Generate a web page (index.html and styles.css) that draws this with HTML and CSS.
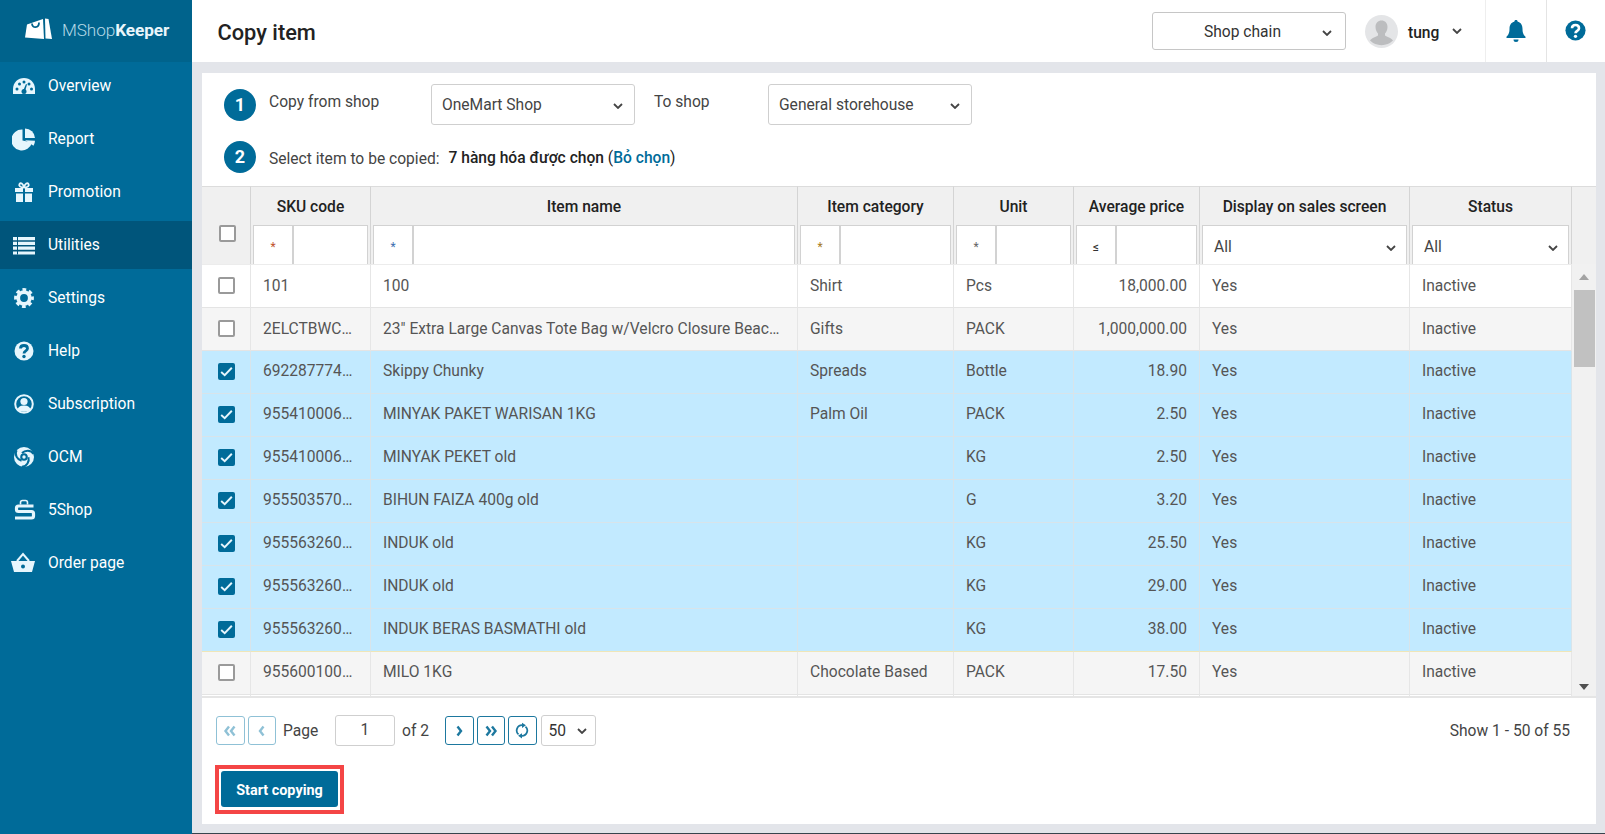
FILE: index.html
```html
<!DOCTYPE html>
<html lang="en">
<head>
<meta charset="utf-8">
<title>Copy item</title>
<link rel="stylesheet" href="styles.css">
</head>
<body>
<div class="app">
  <aside class="sidebar">
    <div class="logo">
      <svg class="logo-icon" viewBox="0 0 28 24"><path fill="#fff" d="M3 7.500 19 2l1 20-19-1.500z"/><path fill="#fff" d="M21 1.500 24.500 2 28 22l-6.500-.5z"/><path fill="none" stroke="#00638c" stroke-width="1.800" d="M8 6.500c0 5 7 5 7-1"/></svg>
      <span class="logo-text"><span class="logo-light">MShop</span><b>Keeper</b></span>
    </div>
    <nav class="menu">
      <a class="item"><svg class="ico" viewBox="0 0 24 24"><path fill="#e6f6fd" d="M1 20v-5C1 8.500 6 4 12 4s11 4.500 11 11v5z"/><g fill="#006b99"><circle cx="5" cy="15" r="1.500"/><circle cx="7.500" cy="10" r="1.500"/><circle cx="12" cy="8" r="1.500"/><circle cx="17" cy="10" r="1.500"/><circle cx="19.500" cy="15" r="1.500"/><circle cx="12" cy="17.500" r="2.500"/><path d="M11 17l3-7 1 .5-2 7z"/></g></svg><span>Overview</span></a>
      <a class="item"><svg class="ico" viewBox="0 0 24 24"><path fill="#e6f6fd" d="M10.500 2.500A10.500 10.500 0 1 0 20 15.500l-9.500-2z"/><path fill="#e6f6fd" d="M13 1.500a10 10 0 0 1 10 9.500H13z"/><path fill="#e6f6fd" d="M13 13.200l10 .5a10 10 0 0 1-1.500 5z"/></svg><span>Report</span></a>
      <a class="item"><svg class="ico" viewBox="0 0 24 24"><path fill="#e6f6fd" d="M3 8h8v4H3zM13 8h8v4h-8zM4 13.500h7V22H4zM13 13.500h7V22h-7z"/><path fill="none" stroke="#e6f6fd" stroke-width="1.800" d="M12 7.500C8 7.500 6.500 5.500 7.500 4S11 3 12 7.500c1-4.500 3.500-5 4.500-3.500s-.5 3.500-4.500 3.500z"/></svg><span>Promotion</span></a>
      <a class="item active"><svg class="ico" viewBox="0 0 24 24"><path fill="#e6f6fd" d="M1 4h22v3.200H1zM1 8.800h22V12H1zM1 13.600h22v3.200H1zM1 18.400h22v3.200H1z"/><path fill="#00557b" d="M5 4h1v17.600H5z"/></svg><span>Utilities</span></a>
      <a class="item"><svg class="ico" viewBox="0 0 24 24"><circle cx="12" cy="12" r="5.800" fill="none" stroke="#e6f6fd" stroke-width="3.800"/><circle cx="12" cy="12" r="8.400" fill="none" stroke="#e6f6fd" stroke-width="3" stroke-dasharray="3.700 2.900" stroke-dashoffset="1.800"/></svg><span>Settings</span></a>
      <a class="item"><svg class="ico" viewBox="0 0 24 24"><circle cx="12" cy="12" r="9.500" fill="#e6f6fd"/><path fill="none" stroke="#006b99" stroke-width="2.800" d="M8.500 9.500C8.500 5.500 15.500 5.500 15.500 9.500c0 2.500-3.500 2.300-3.500 5"/><circle cx="12" cy="17.500" r="1.700" fill="#006b99"/></svg><span>Help</span></a>
      <a class="item"><svg class="ico" viewBox="0 0 24 24"><circle cx="12" cy="12" r="8.800" fill="none" stroke="#e6f6fd" stroke-width="2"/><circle cx="12" cy="9.500" r="3.600" fill="#e6f6fd"/><path fill="#e6f6fd" d="M5.500 17.500c1-3.500 4-4 6.500-4s5.500.5 6.500 4c-3.500 3-9.500 3-13 0z"/></svg><span>Subscription</span></a>
      <a class="item"><svg class="ico" viewBox="0 0 24 24"><circle cx="12" cy="12" r="10" fill="#e6f6fd"/><g fill="none" stroke="#006b99" stroke-width="2"><path d="M21.500 9C19 4.500 13 5 10 8"/><path transform="rotate(120 12 12)" d="M21.500 9C19 4.500 13 5 10 8"/><path transform="rotate(240 12 12)" d="M21.500 9C19 4.500 13 5 10 8"/></g><circle cx="12" cy="12" r="3.800" fill="#006b99"/><circle cx="12" cy="12" r="1.700" fill="#e6f6fd"/></svg><span>OCM</span></a>
      <a class="item"><svg class="ico" viewBox="0 0 24 24"><path fill="none" stroke="#e6f6fd" stroke-width="3.200" d="M21.500 8H6.500a2 2 0 0 0-2 2v1.500a2 2 0 0 0 2 2h13a2 2 0 0 1 2 2v2.500a2 2 0 0 1-2 2H3"/><path fill="none" stroke="#e6f6fd" stroke-width="1.600" d="M8.500 6.500V4.500a2 2 0 0 1 2-2h3a2 2 0 0 1 2 2v2"/></svg><span>5Shop</span></a>
      <a class="item"><svg class="ico ico-basket" viewBox="0 0 24 24"><path fill="#e6f6fd" d="M0 10h24l-3 11H3z"/><path fill="none" stroke="#e6f6fd" stroke-width="2" d="M6 10l6-7 6 7"/><circle cx="12" cy="15.500" r="2" fill="#006b99"/></svg><span>Order page</span></a>
    </nav>
  </aside>

  <div class="main">
    <header class="topbar">
      <h1 class="title">Copy item</h1>
      <div class="shop-select"><span>Shop chain</span><svg class="chev" viewBox="0 0 10 6"><path d="M1 1l4 4 4-4"/></svg></div>
      <div class="user">
        <svg class="avatar" viewBox="0 0 33 33"><circle cx="16.500" cy="16.500" r="16.500" fill="#e4e5e7"/><path fill="#bcbdbf" d="M10.500 12c0-4 2.500-6.500 6-6.500s6 2.500 6 6.500c0 3-1.500 5.500-2.500 6.500v2c2 1.500 6 2 8 5a16.500 16.500 0 0 1-23 0c2-3 6-3.500 8-5v-2c-1-1-2.500-3.500-2.500-6.500z"/></svg>
        <span class="user-name">tung</span>
        <svg class="chev" viewBox="0 0 10 6"><path d="M1 1l4 4 4-4"/></svg>
      </div>
      <div class="top-cell bell">
        <svg viewBox="0 0 20 24"><path fill="#006b99" d="M10 1c1 0 1.700.7 1.700 1.700 3.300.7 4.800 3.500 4.800 7 0 4.500 1.300 6.300 3 8V19H.5v-1.300c1.700-1.700 3-3.500 3-8 0-3.500 1.500-6.300 4.800-7C8.300 1.700 9 1 10 1z"/><path fill="#006b99" d="M7.500 20.500h5a2.500 2.500 0 0 1-5 0z"/></svg>
      </div>
      <div class="top-cell help">
        <svg viewBox="0 0 24 24"><circle cx="12" cy="12" r="11.500" fill="#006b99"/><path fill="none" stroke="#fff" stroke-width="3" d="M8 9.500C8 4.500 16 4.500 16 9.500c0 3-4 2.700-4 5.500"/><circle cx="12" cy="18.700" r="1.900" fill="#fff"/></svg>
      </div>
    </header>

    <section class="panel">
      <div class="steps">
        <div class="step-one">
          <span class="badge">1</span>
          <span class="label label-from">Copy from shop</span>
          <div class="select select-shop"><span>OneMart Shop</span><svg class="chev" viewBox="0 0 10 6"><path d="M1 1l4 4 4-4"/></svg></div>
          <span class="label label-to">To shop</span>
          <div class="select select-shop"><span>General storehouse</span><svg class="chev" viewBox="0 0 10 6"><path d="M1 1l4 4 4-4"/></svg></div>
        </div>
        <div class="step-two">
          <span class="badge">2</span>
          <span class="label select-label">Select item to be copied:</span>
          <span class="chosen">7 hàng hóa được chọn <span class="paren">(</span><a class="clear">Bỏ chọn</a><span class="paren">)</span></span>
        </div>
      </div>

      <table class="grid grid-head">
        <colgroup><col class="c1"><col class="c2"><col class="c3"><col class="c4"><col class="c5"><col class="c6"><col class="c7"><col class="c8"><col class="c9"></colgroup>
        <tr class="head-row">
          <th rowspan="2" class="check-head"><span class="cb"></span></th>
          <th>SKU code</th><th>Item name</th><th>Item category</th><th>Unit</th><th>Average price</th><th>Display on sales screen</th><th>Status</th>
          <th rowspan="2" class="filler"></th>
        </tr>
        <tr class="filter-row">
          <td><div class="filter"><span class="op red">*</span><span class="val"></span></div></td>
          <td><div class="filter"><span class="op blue">*</span><span class="val"></span></div></td>
          <td><div class="filter"><span class="op amber">*</span><span class="val"></span></div></td>
          <td><div class="filter"><span class="op gray">*</span><span class="val"></span></div></td>
          <td><div class="filter"><span class="op dark">≤</span><span class="val"></span></div></td>
          <td><div class="filter filter-select"><span>All</span><svg class="chev" viewBox="0 0 10 6"><path d="M1 1l4 4 4-4"/></svg></div></td>
          <td><div class="filter filter-select"><span>All</span><svg class="chev" viewBox="0 0 10 6"><path d="M1 1l4 4 4-4"/></svg></div></td>
        </tr>
      </table>

      <div class="body-wrap">
        <div class="body-scroll">
          <table class="grid grid-body">
            <colgroup><col class="c1"><col class="c2"><col class="c3"><col class="c4"><col class="c5"><col class="c6"><col class="c7"><col class="c8"></colgroup>
            <tr class="first top"><td class="ck"><span class="cb"></span></td><td>101</td><td>100</td><td>Shirt</td><td>Pcs</td><td class="num">18,000.00</td><td>Yes</td><td>Inactive</td></tr>
            <tr class="alt top"><td class="ck"><span class="cb"></span></td><td>2ELCTBWCBLK</td><td>23" Extra Large Canvas Tote Bag w/Velcro Closure Beach Shopping Bag</td><td>Gifts</td><td>PACK</td><td class="num">1,000,000.00</td><td>Yes</td><td>Inactive</td></tr>
            <tr class="sel"><td class="ck"><span class="cb on"><svg viewBox="0 0 16 16"><path d="M3 8.500l3.300 3L13 4.500"/></svg></span></td><td>6922877741234</td><td>Skippy Chunky</td><td>Spreads</td><td>Bottle</td><td class="num">18.90</td><td>Yes</td><td>Inactive</td></tr>
            <tr class="sel"><td class="ck"><span class="cb on"><svg viewBox="0 0 16 16"><path d="M3 8.500l3.300 3L13 4.500"/></svg></span></td><td>9554100061111</td><td>MINYAK PAKET WARISAN 1KG</td><td>Palm Oil</td><td>PACK</td><td class="num">2.50</td><td>Yes</td><td>Inactive</td></tr>
            <tr class="sel"><td class="ck"><span class="cb on"><svg viewBox="0 0 16 16"><path d="M3 8.500l3.300 3L13 4.500"/></svg></span></td><td>9554100062222</td><td>MINYAK PEKET old</td><td></td><td>KG</td><td class="num">2.50</td><td>Yes</td><td>Inactive</td></tr>
            <tr class="sel"><td class="ck"><span class="cb on"><svg viewBox="0 0 16 16"><path d="M3 8.500l3.300 3L13 4.500"/></svg></span></td><td>9555035701111</td><td>BIHUN FAIZA 400g old</td><td></td><td>G</td><td class="num">3.20</td><td>Yes</td><td>Inactive</td></tr>
            <tr class="sel"><td class="ck"><span class="cb on"><svg viewBox="0 0 16 16"><path d="M3 8.500l3.300 3L13 4.500"/></svg></span></td><td>9555632601111</td><td>INDUK old</td><td></td><td>KG</td><td class="num">25.50</td><td>Yes</td><td>Inactive</td></tr>
            <tr class="sel"><td class="ck"><span class="cb on"><svg viewBox="0 0 16 16"><path d="M3 8.500l3.300 3L13 4.500"/></svg></span></td><td>9555632602222</td><td>INDUK old</td><td></td><td>KG</td><td class="num">29.00</td><td>Yes</td><td>Inactive</td></tr>
            <tr class="sel last-sel"><td class="ck"><span class="cb on"><svg viewBox="0 0 16 16"><path d="M3 8.500l3.300 3L13 4.500"/></svg></span></td><td>9555632603333</td><td>INDUK BERAS BASMATHI old</td><td></td><td>KG</td><td class="num">38.00</td><td>Yes</td><td>Inactive</td></tr>
            <tr class="alt tail"><td class="ck"><span class="cb"></span></td><td>9556001001111</td><td>MILO 1KG</td><td>Chocolate Based</td><td>PACK</td><td class="num">17.50</td><td>Yes</td><td>Inactive</td></tr>
            <tr><td></td><td></td><td></td><td></td><td></td><td></td><td></td><td></td></tr>
          </table>
        </div>
        <div class="scrollbar">
          <span class="arrow-up"></span>
          <div class="track"><div class="thumb"></div></div>
          <span class="arrow-down"></span>
        </div>
      </div>

      <div class="pager">
        <button class="pg off"><svg viewBox="0 0 14 12"><path d="M6 1.500 2.500 6 6 10.500M11.500 1.500 8 6l3.500 4.500"/></svg></button>
        <button class="pg off"><svg viewBox="0 0 14 12"><path d="M8.500 1.500 5 6l3.500 4.500"/></svg></button>
        <span class="pg-page">Page</span>
        <div class="pg-input">1</div>
        <span class="pg-of">of 2</span>
        <button class="pg"><svg viewBox="0 0 14 12"><path d="M5.500 1.500 9 6l-3.500 4.500"/></svg></button>
        <button class="pg"><svg viewBox="0 0 14 12"><path d="M2.500 1.500 6 6l-3.500 4.500M8 1.500 11.500 6 8 10.500"/></svg></button>
        <button class="pg"><svg class="sync" viewBox="0 0 16 18"><path d="M8 3A6 6 0 0 0 4 13.500M8 15a6 6 0 0 0 4-10.500"/><path class="tip" d="M8 0v6l4.500-3zM8 18v-6l-4.500 3z"/></svg></button>
        <div class="pg-size"><span>50</span><svg class="chev" viewBox="0 0 10 6"><path d="M1 1l4 4 4-4"/></svg></div>
        <span class="pg-info">Show 1 - 50 of 55</span>
      </div>

      <div class="actions">
        <div class="callout"><button class="start">Start copying</button></div>
      </div>
    </section>
  </div>
</div>
</body>
</html>
```
FILE: styles.css
```css
* { box-sizing: border-box; }
html, body { margin: 0; padding: 0; height: 100%; }
body { font-family: Roboto, "Noto Sans", sans-serif; font-size: 15.600px; color: #444; overflow: hidden; background: #e3e5ea; }
.app { display: flex; width: 1605px; height: 834px; }

/* sidebar */
.sidebar { width: 192px; flex: none; background: #006b99; color: #fff; }
.logo { height: 62px; background: #00638c; display: flex; align-items: center; padding-left: 24px; }
.logo-icon { width: 28px; height: 24px; margin-top: -4px; }
.logo-text { margin-left: 10px; font-size: 17.200px; letter-spacing: -.1px; margin-top: -3px; }
.logo-light { color: #b5d8e6; font-weight: 300; }
.logo-text b { font-weight: 700; color: #e9f6fb; }
.item { display: flex; align-items: center; height: 48px; margin-bottom: 5px; padding-left: 12px; color: #fff; }
.item.active { background: #00557b; }
.ico { width: 24px; height: 24px; flex: none; margin-right: 12px; }
.ico-basket { margin-left: -1px; margin-right: 13px; }

/* main */
.main { flex: 1; min-width: 0; display: flex; flex-direction: column; border-bottom: 1px solid #37444d; }
.topbar { height: 62px; flex: none; background: #fff; display: flex; align-items: stretch; padding-left: 25.500px; }
.title { margin: 0; font-size: 21.800px; font-weight: 500; color: #222; line-height: 66px; flex: 1; }
.shop-select { width: 194px; height: 38px; margin-top: 12px; border: 1px solid #c6c6c6; border-radius: 3px; display: flex; align-items: center; padding: 2px 0 0 51px; color: #333; }
.shop-select span { flex: 1; }
.chev { width: 10px; height: 6px; flex: none; fill: none; stroke: #444; stroke-width: 1.800; }
.shop-select .chev { margin-right: 13px; margin-top: 2px; }
.user { width: 140px; display: flex; align-items: center; padding-left: 19px; border-right: 1px solid #eeeeee; }
.avatar { width: 33px; height: 33px; flex: none; }
.user-name { margin-left: 10px; font-weight: 500; color: #222; width: 44px; padding-top: 4px; }
.top-cell { display: flex; align-items: center; justify-content: center; }
.bell { width: 61px; border-right: 1px solid #e4e4e4; }
.bell svg { width: 20px; height: 24px; }
.help { width: 58px; padding-right: 2px; }
.help svg { width: 21px; height: 21px; margin-top: -2px; }

/* panel */
.panel { flex: 1; margin: 11px 9px 9px 10px; background: #fff; display: flex; flex-direction: column; min-height: 0; }
.steps { height: 113px; flex: none; padding: 11px 0 0 22px; }
.step-one { display: flex; align-items: center; height: 41px; }
.step-two { display: flex; align-items: center; height: 31px; margin-top: 16px; }
.badge { width: 32px; height: 32px; border-radius: 50%; background: #006b99; color: #fff; font-weight: 700; font-size: 18px; display: flex; align-items: center; justify-content: center; flex: none; }
.label { color: #444; }
.label-from { margin-left: 13px; width: 162px; margin-bottom: 6px; flex: none; }
.label-to { margin-left: 19px; width: 114px; margin-bottom: 6px; flex: none; }
.select { height: 41px; border: 1px solid #cfcfcf; border-radius: 3px; display: flex; align-items: center; color: #444; }
.select-shop { width: 204px; padding: 0 10px; }
.select span { flex: 1; }
.select .chev { margin-right: 1px; margin-top: 3px; }
.select-label { margin-left: 13px; margin-top: 5px; }
.chosen { margin-left: 9px; font-weight: 500; color: #222; margin-top: 3px; }
.paren { font-weight: 400; }
.clear { color: #006b99; }

/* grid */
.grid { table-layout: fixed; border-collapse: separate; border-spacing: 0; flex: none; }
.grid-head { width: 1394px; }
.grid-body { width: 1370px; }
.c1 { width: 49px; } .c2 { width: 120px; } .c3 { width: 427px; } .c4 { width: 156px; } .c5 { width: 120px; }
.c6 { width: 126px; } .c7 { width: 210px; } .c8 { width: 162px; } .c9 { width: 24px; }
.grid-head th { background: #f0f0f0; font-weight: 500; color: #222; border-top: 1px solid #dcdcdc; border-right: 1px solid #d4d4d4; height: 39px; padding: 2px 0 0; font-size: 15.600px; }
.grid-head .check-head { vertical-align: top; padding-top: 38px; }
.grid-head .filler { border-right: 0; }
.filter-row td { background: #f0f0f0; border-right: 1px solid #d4d4d4; height: 39px; padding: 0 2px 0 2px; }
.filter { height: 39px; background: #fff; border: 2px solid #d2d2d2; border-bottom: 0; border-width: 1.500px 1.500px 0; display: flex; }
.op { width: 40px; flex: none; border-right: 2px solid #d2d2d2; display: flex; align-items: center; justify-content: center; font-size: 12px; padding-top: 3px; }
.red { color: #c0522d; } .blue { color: #3f6fb0; } .amber { color: #a67a24; } .gray { color: #666; } .dark { color: #333; }
.val { flex: 1; }
.filter-select { align-items: center; padding: 4px 10px 0 11px; color: #444; }
.filter-select span { flex: 1; }
.filter-select .chev { margin-top: 1px; }

.body-wrap { display: flex; height: 434px; flex: none; border-bottom: 2px solid #e5e5e5; }
.body-scroll { width: 1370px; flex: none; overflow: hidden; }
.grid-body td { height: 43px; padding: 0 12px 3px; border-right: 1px solid #e6e6e6; border-bottom: 1px solid #e4e4e4; white-space: nowrap; overflow: hidden; text-overflow: ellipsis; color: #555; }
.grid-body .first td { height: 44px; border-top: 1px solid #ececec; }
.grid-body .top td { padding-bottom: 1px; }
.grid-body .alt td { background: #f5f5f5; }
.grid-body .sel td { background: #c2eaff; border-color: #d8e4ea; }
.grid-body .last-sel td { border-bottom-color: #efe6b8; }
.grid-body .num { text-align: right; }
.grid-body .ck { padding: 0 0 0 16px; vertical-align: middle; }
.grid-body .sel .ck { padding-bottom: 1px; }
.grid-body .tail .ck { padding-bottom: 2px; }
.cb { display: block; width: 17px; height: 17px; border: 2.500px solid #9a9a9a; border-radius: 2px; background: #fff; }
.check-head .cb { margin-left: 17px; }
.cb.on { background: #006b99; border: 0; }
.cb.on svg { display: block; width: 17px; height: 17px; fill: none; stroke: #e6f6fd; stroke-width: 1.800; }

.scrollbar { width: 24px; flex: none; background: #f1f1f1; display: flex; flex-direction: column; align-items: center; padding-top: 10px; }
.arrow-up { width: 0; height: 0; border: 5.500px solid transparent; border-top: 0; border-bottom: 6px solid #a3a3a3; }
.track { flex: 1; width: 100%; padding: 10px 1px 0 2px; }
.thumb { height: 77px; background: #c1c1c1; }
.arrow-down { width: 0; height: 0; border: 5.500px solid transparent; border-bottom: 0; border-top: 6px solid #505050; margin-bottom: 6px; }

/* pager */
.pager { height: 64px; flex: none; display: flex; align-items: center; padding: 1px 26px 0 14px; color: #444; }
.pg { width: 28.500px; height: 29px; padding: 0; margin-right: 3px; background: #fff; border: 1px solid #1d789f; border-radius: 3px; display: flex; align-items: center; justify-content: center; }
.pg svg { width: 14px; height: 12px; fill: none; stroke: #1d789f; stroke-width: 2.400; }
.pg .sync { width: 14px; height: 17px; stroke-width: 2; }
.pg .sync .tip { fill: #1d789f; stroke: none; }
.pg.off { border-color: #8fc1d6; }
.pg.off svg { stroke: #8fc1d6; }
.pg-page { width: 52px; margin-left: 4px; flex: none; }
.pg-input { width: 60px; height: 31px; border: 1px solid #cfcfcf; border-radius: 3px; text-align: center; line-height: 28px; flex: none; }
.pg-of { width: 50px; padding-left: 7px; flex: none; }
.pg-size { width: 55px; height: 31px; margin-left: 1px; border: 1px solid #cfcfcf; border-radius: 3px; display: flex; align-items: center; padding: 0 8px 0 7px; color: #333; }
.pg-size span { flex: 1; }
.pg-info { margin-left: auto; }

/* action */
.actions { flex: none; padding: 3px 0 0 13px; }
.callout { display: inline-block; border: 4px solid #f44545; padding: 2px 2px 3px; line-height: 0; }
.start { width: 117px; height: 36px; padding: 2px 0 0; border: 0; border-radius: 3px; background: #006b99; color: #fff; font-family: Roboto, sans-serif; font-weight: 700; font-size: 14.400px; }
```
